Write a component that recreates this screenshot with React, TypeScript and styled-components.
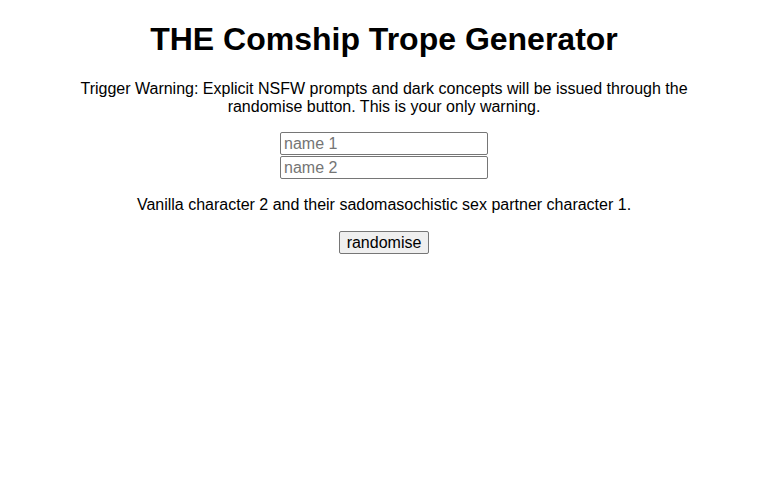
import { useState } from "react";
import styled, { createGlobalStyle } from "styled-components";

const GlobalStyle = createGlobalStyle`
  html, body {
    margin: 0;
    padding: 0;
    background: #ffffff;
    font-family: "Liberation Sans", Arial, sans-serif;
    color: #000000;
  }
`

const PageBase = styled.main`
  text-align: center;
  font-size: 16px;
  padding: 0 8px;
`

const TitleBase = styled.h1`
  font-size: 32px;
  font-weight: 700;
  line-height: 37px;
  margin: 21px 0 22px;
`

const TextBase = styled.p`
  font-size: 16px;
  line-height: 18px;
  margin: 0 auto 16px;
  max-width: 620px;
`

const FieldsBase = styled.div`
  display: flex;
  flex-direction: column;
  align-items: center;
  gap: 1px;
  margin-bottom: 17px;
`

const NameInput = styled.input`
  box-sizing: border-box;
  width: 208px;
  height: 23px;
  padding: 1px 3px;
  border: 1px solid #767676;
  border-radius: 2px;
  font-family: "Liberation Sans", Arial, sans-serif;
  font-size: 16px;
  color: #000;
  background: #fff;
  &::placeholder {
    color: #757575;
  }
`

const RandomButton = styled.button`
  box-sizing: border-box;
  height: 23px;
  padding: 0 7px;
  border: 1px solid #767676;
  border-radius: 2px;
  background: #efefef;
  font-family: "Liberation Sans", Arial, sans-serif;
  font-size: 16px;
  color: #000;
  cursor: pointer;
  &:hover {
    background: #e5e5e5;
  }
`

const ButtonRow = styled.div`
  margin-top: 17px;
`

const tropes = [
  "Vanilla {2} and their sadomasochistic sex partner {1}.",
  "{1} and {2} are stuck in a lift together.",
  "{2} has to pretend to be dating {1}.",
  "{1} wakes up in {2}'s body.",
]

const App = () => {
  const [name1, setName1] = useState("")
  const [name2, setName2] = useState("")
  const [index, setIndex] = useState(0)

  const one = name1 || "character 1"
  const two = name2 || "character 2"
  const text = tropes[index].replace("{1}", one).replace("{2}", two)

  return <PageBase>
    <GlobalStyle />
    <TitleBase>THE Comship Trope Generator</TitleBase>
    <TextBase>
      Trigger Warning: Explicit NSFW prompts and dark concepts will be issued through the randomise button. This is your only warning.
    </TextBase>
    <FieldsBase>
      <NameInput placeholder="name 1" value={name1} onChange={e => setName1(e.target.value)} />
      <NameInput placeholder="name 2" value={name2} onChange={e => setName2(e.target.value)} />
    </FieldsBase>
    <TextBase>{text}</TextBase>
    <ButtonRow>
      <RandomButton onClick={() => setIndex(Math.floor(Math.random() * tropes.length))}>randomise</RandomButton>
    </ButtonRow>
  </PageBase>
}

export default App;
